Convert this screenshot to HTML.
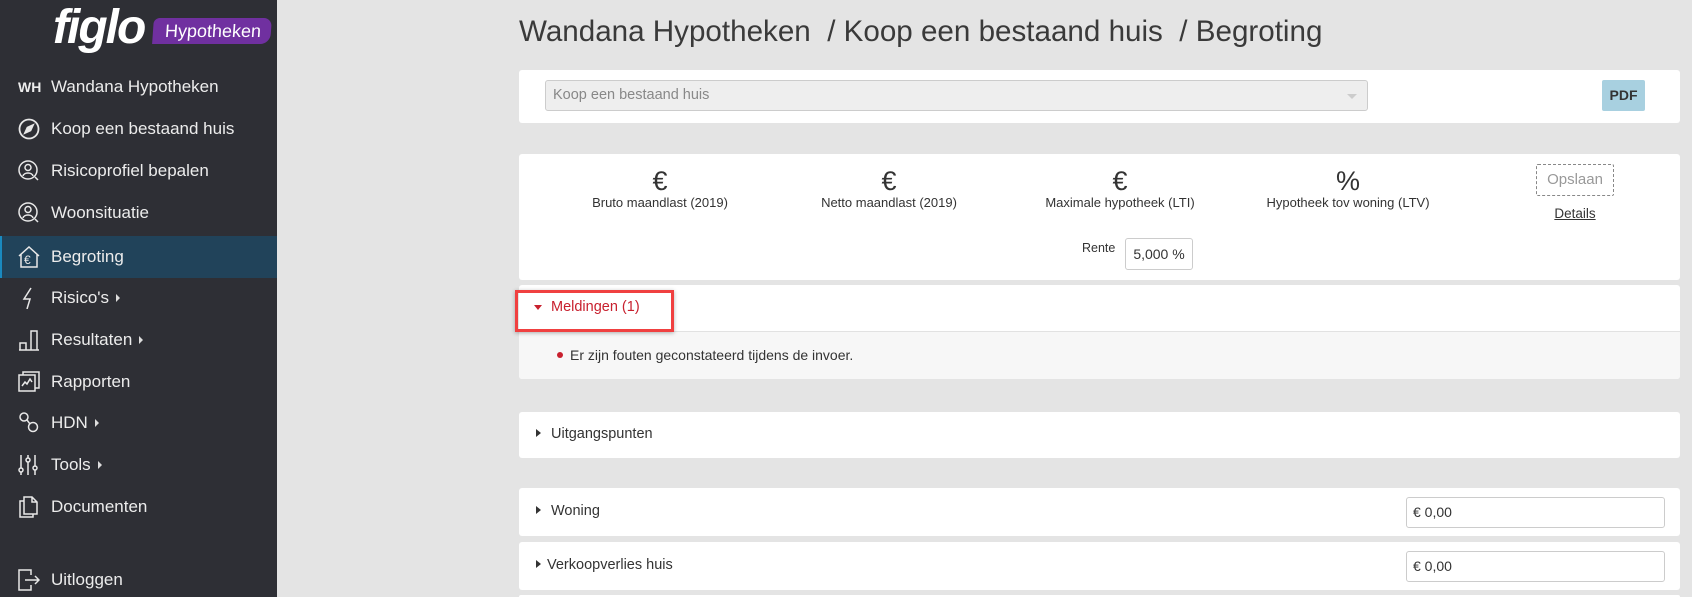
<!DOCTYPE html>
<html><head><meta charset="utf-8"><style>
*{box-sizing:border-box;margin:0;padding:0}
html,body{width:1692px;height:597px;overflow:hidden}
body{background:#e4e4e4;font-family:"Liberation Sans",Arial,sans-serif;position:relative;color:#333}
.sb{position:absolute;left:0;top:0;width:277px;height:597px;background:#2e2f35}
.logo{position:absolute;left:53px;top:0px;color:#fff;font-size:48px;font-weight:bold;font-style:italic;letter-spacing:-2px}
.badge{position:absolute;left:153px;top:18px;width:118px;height:26px;background:#7030a0;color:#fff;font-size:18px;line-height:26px;padding-left:12px;border-radius:6px 8px 10px 0;transform:skewX(-4deg)}
.mi{position:absolute;left:0;width:277px;height:42px;color:#ececec;font-size:17px;line-height:42px}
.mi .t{position:absolute;left:51px}
.mi svg{position:absolute;left:18px;top:10px}
.mi.act{background:#21435a;border-left:2px solid #1a8ac0}
.car{display:inline-block;width:0;height:0;border-left:4px solid #ddd;border-top:4px solid transparent;border-bottom:4px solid transparent;margin-left:7px;vertical-align:1px}
.title{position:absolute;left:519px;top:15px;font-size:29.6px;color:#3a3a3a;white-space:pre}
.card{position:absolute;left:519px;width:1161px;background:#fff;border-radius:3px}
.sel{position:absolute;left:26px;top:10px;width:823px;height:31px;background:#eee;border:1px solid #ccc;border-radius:3px;color:#888;font-size:14.5px;line-height:29px;padding-left:7px}
.sel:after{content:"";position:absolute;right:10px;top:13px;border-top:5px solid #ccc;border-left:5px solid transparent;border-right:5px solid transparent}
.pdf{position:absolute;left:1083px;top:10px;width:43px;height:31px;background:#a8d0e0;border-radius:2px;font-weight:bold;font-size:14px;line-height:31px;text-align:center;color:#333}
.col{position:absolute;top:12px;width:220px;text-align:center}
.col .s{font-size:27px;line-height:30px;color:#333}
.col .l{font-size:13px;color:#333;margin-top:-1px}
.tri{display:inline-block;border-left:5px solid #333;border-top:4px solid transparent;border-bottom:4px solid transparent}
.lab{position:absolute;font-size:14.5px;color:#333}
.inp{position:absolute;left:887px;top:9px;width:259px;height:31px;border:1px solid #ccc;border-radius:3px;font-size:14px;line-height:29px;padding-left:6px;color:#333}
</style></head><body>
<div class="sb">
<div class="logo">figlo</div>
<div class="badge">Hypotheken</div>
<div class="mi" style="top:66px"><b style="position:absolute;left:18px;font-size:14px">WH</b><span class="t">Wandana Hypotheken</span></div>
<div class="mi" style="top:108px"><svg width="22" height="22" viewBox="0 0 22 22" fill="none" stroke="#e8e8e8" stroke-width="1.8"><circle cx="11" cy="11" r="9.5"/><path d="M15 7l-2.5 5.5L7 15l2.5-5.5z" fill="#e8e8e8"/></svg><span class="t">Koop een bestaand huis</span></div>
<div class="mi" style="top:150px"><svg width="22" height="22" viewBox="0 0 22 22" fill="none" stroke="#e8e8e8" stroke-width="1.5"><circle cx="10" cy="10" r="9"/><circle cx="10" cy="7.5" r="3"/><path d="M5 16c1-4 9-4 10 0M17 17l3 3"/></svg><span class="t">Risicoprofiel bepalen</span></div>
<div class="mi" style="top:192px"><svg width="22" height="22" viewBox="0 0 22 22" fill="none" stroke="#e8e8e8" stroke-width="1.5"><circle cx="10" cy="10" r="9"/><circle cx="10" cy="7.5" r="3"/><path d="M5 16c1-4 9-4 10 0M17 17l3 3"/></svg><span class="t">Woonsituatie</span></div>
<div class="mi act" style="top:236px"><svg width="22" height="22" viewBox="0 0 22 22" fill="none" stroke="#e8e8e8" stroke-width="1.5" style="left:16px"><path d="M1 10L11 1l10 9M3 8v13h16V8"/><text x="6" y="18" fill="#e8e8e8" stroke="none" font-size="12" font-family="Liberation Sans">€</text></svg><span class="t" style="left:49px">Begroting</span></div>
<div class="mi" style="top:277px"><svg width="22" height="22" viewBox="0 0 22 22" fill="none" stroke="#e8e8e8" stroke-width="1.5"><path d="M13 1L6 12h6l-3 10"/></svg><span class="t">Risico's<i class="car"></i></span></div>
<div class="mi" style="top:319px"><svg width="22" height="22" viewBox="0 0 22 22" fill="none" stroke="#e8e8e8" stroke-width="1.5"><path d="M1 21h20M2 21v-7h6v7M13 21V2h6v19"/></svg><span class="t">Resultaten<i class="car"></i></span></div>
<div class="mi" style="top:361px"><svg width="22" height="22" viewBox="0 0 22 22" fill="none" stroke="#e8e8e8" stroke-width="1.5"><rect x="1" y="4" width="16" height="16"/><path d="M5 4V1h16v16h-4M4 15l3-4 2 2 3-5 2 3"/></svg><span class="t">Rapporten</span></div>
<div class="mi" style="top:402px"><svg width="22" height="22" viewBox="0 0 22 22" fill="none" stroke="#e8e8e8" stroke-width="1.5"><circle cx="6" cy="5" r="4"/><circle cx="15" cy="15" r="4.5"/><path d="M9 8l3 4"/></svg><span class="t">HDN<i class="car"></i></span></div>
<div class="mi" style="top:444px"><svg width="22" height="22" viewBox="0 0 22 22" fill="none" stroke="#e8e8e8" stroke-width="1.5"><path d="M3 1v20M10 1v20M17 1v20"/><circle cx="3" cy="16" r="2" fill="#2e2f35"/><circle cx="10" cy="6" r="2" fill="#2e2f35"/><circle cx="17" cy="14" r="2" fill="#2e2f35"/></svg><span class="t">Tools<i class="car"></i></span></div>
<div class="mi" style="top:486px"><svg width="22" height="22" viewBox="0 0 22 22" fill="none" stroke="#e8e8e8" stroke-width="1.5"><path d="M6 1h8l5 5v12H6zM14 1v5h5M6 5H2v16h13v-3"/></svg><span class="t">Documenten</span></div>
<div class="mi" style="top:559px"><svg width="22" height="22" viewBox="0 0 22 22" fill="none" stroke="#e8e8e8" stroke-width="1.5"><path d="M13 6V1H1v20h12v-5M7 11h14M17 7l4 4-4 4"/></svg><span class="t">Uitloggen</span></div>
</div>

<div class="title">Wandana Hypotheken  / Koop een bestaand huis  / Begroting</div>

<div class="card" style="top:70px;height:53px">
<div class="sel">Koop een bestaand huis</div>
<div class="pdf">PDF</div>
</div>

<div class="card" style="top:154px;height:126px">
<div class="col" style="left:31px"><div class="s">€</div><div class="l">Bruto maandlast (2019)</div></div>
<div class="col" style="left:260px"><div class="s">€</div><div class="l">Netto maandlast (2019)</div></div>
<div class="col" style="left:491px"><div class="s">€</div><div class="l">Maximale hypotheek (LTI)</div></div>
<div class="col" style="left:719px"><div class="s">%</div><div class="l">Hypotheek tov woning (LTV)</div></div>
<div style="position:absolute;left:1017px;top:10px;width:78px;height:32px;border:1px dashed #888;border-radius:2px;color:#999;font-size:15px;text-align:center;line-height:30px">Opslaan</div>
<div style="position:absolute;left:1017px;top:52px;width:78px;text-align:center;font-size:13.5px;text-decoration:underline;color:#333">Details</div>
<div style="position:absolute;left:563px;top:87px;font-size:12.5px">Rente</div>
<div style="position:absolute;left:606px;top:84px;width:68px;height:32px;border:1px solid #ccc;border-radius:3px;font-size:14px;line-height:30px;text-align:center">5,000 %</div>
</div>

<div class="card" style="top:285px;height:94px;overflow:hidden">
<div style="position:absolute;left:0;top:46px;width:100%;height:48px;background:#f7f7f7;border-top:1px solid #e2e2e2"></div>
<div style="position:absolute;left:15px;top:20px;border-top:5px solid #c8202e;border-left:4px solid transparent;border-right:4px solid transparent"></div>
<div class="lab" style="left:32px;top:14px;color:#c8202e;font-size:14.5px">Meldingen (1)</div>
<div style="position:absolute;left:38px;top:67px;width:6px;height:6px;border-radius:50%;background:#c8202e"></div>
<div class="lab" style="left:51px;top:62px;font-size:14px">Er zijn fouten geconstateerd tijdens de invoer.</div>
</div>
<div style="position:absolute;left:515px;top:290px;width:159px;height:42px;border:3px solid #f04040;box-shadow:0 1px 4px rgba(0,0,0,.3)"></div>

<div class="card" style="top:412px;height:46px">
<i class="tri" style="position:absolute;left:17px;top:17px"></i><div class="lab" style="left:32px;top:14px">Uitgangspunten</div>
</div>

<div class="card" style="top:488px;height:48px">
<i class="tri" style="position:absolute;left:17px;top:18px"></i><div class="lab" style="left:32px;top:15px">Woning</div>
<div class="inp">€ 0,00</div>
</div>

<div class="card" style="top:542px;height:48px">
<i class="tri" style="position:absolute;left:17px;top:18px"></i><div class="lab" style="left:28px;top:15px">Verkoopverlies huis</div>
<div class="inp">€ 0,00</div>
</div>

<div class="card" style="top:595px;height:2px;border-radius:3px 3px 0 0"></div>
</body></html>
